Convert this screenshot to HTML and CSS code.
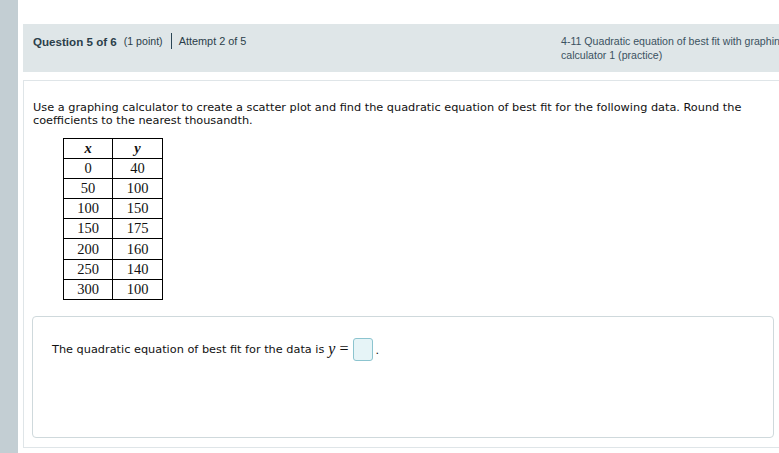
FILE: index.html
```html
<!DOCTYPE html>
<html>
<head>
<meta charset="utf-8">
<link rel="stylesheet" href="styles.css">
</head>
<body>
<div class="page">
  <div class="sidebar"></div>
  <div class="main">
    <div class="qhead">
      <div class="qleft">
        <span class="qnum">Question 5 of 6</span>
        <span class="qpts">(1 point)</span>
        <span class="qdiv"></span>
        <span class="qatt">Attempt 2 of 5</span>
      </div>
      <div class="qright">4-11 Quadratic equation of best fit with graphing calculator 1 (practice)</div>
    </div>
    <div class="panel">
      <p class="prompt">Use a graphing calculator to create a scatter plot and find the quadratic equation of best fit for the following data. Round the coefficients to the nearest thousandth.</p>
      <table class="data">
        <tr><th class="c1">x</th><th class="c2">y</th></tr>
        <tr><td>0</td><td>40</td></tr>
        <tr><td>50</td><td>100</td></tr>
        <tr><td>100</td><td>150</td></tr>
        <tr><td>150</td><td>175</td></tr>
        <tr><td>200</td><td>160</td></tr>
        <tr><td>250</td><td>140</td></tr>
        <tr><td>300</td><td>100</td></tr>
      </table>
      <div class="answer">
        <p class="eq"><span>The quadratic equation of best fit for the data is</span><span class="math"><i>y</i> =</span><span class="inbox"></span><span class="dot">.</span></p>
      </div>
    </div>
  </div>
</div>
</body>
</html>
```

FILE: styles.css
```css
html, body {
  margin: 0;
  padding: 0;
  background: #ffffff;
  overflow: hidden;
}
.page {
  display: flex;
  height: 453px;
  width: 779px;
  overflow: hidden;
}
.sidebar {
  flex: none;
  width: 18px;
  background: #c3ced3;
}
.main {
  flex: none;
  width: 760px;
  margin-left: 5px;
  padding-top: 24px;
}
.qhead {
  height: 48px;
  background: #dfe6e8;
  display: flex;
  align-items: flex-start;
  font-family: "Liberation Sans", Arial, sans-serif;
  color: #2b3e4a;
}
.qleft {
  flex: none;
  width: 538px;
  padding-left: 10px;
  box-sizing: border-box;
  display: flex;
  align-items: center;
  height: 16px;
  margin-top: 9px;
}
.qnum {
  font-weight: bold;
  font-size: 11.6px;
}
.qpts {
  font-size: 10.6px;
  margin-left: 7px;
}
.qdiv {
  width: 1px;
  height: 16px;
  background: #2b4656;
  margin: 0 7px 0 8px;
}
.qatt {
  font-size: 10.9px;
}
.qright {
  flex: none;
  width: 260px;
  font-size: 10.6px;
  line-height: 14px;
  padding-top: 10px;
  color: #3b5261;
}
.panel {
  margin-top: 8px;
  border: 1px solid #dfe5e8;
  padding: 0 8px;
  box-sizing: border-box;
  height: 368px;
  font-family: "DejaVu Sans", Verdana, sans-serif;
}
.prompt {
  margin: 0;
  padding: 20px 0 0 1px;
  font-size: 11.3px;
  line-height: 13px;
  color: #111111;
}
.data {
  border-collapse: collapse;
  margin: 11px 0 0 31px;
  font-family: "Liberation Serif", "Times New Roman", serif;
  font-size: 14.5px;
  color: #111111;
}
.data th, .data td {
  border: 1px solid #000000;
  height: 19.1px;
  padding: 0;
  text-align: center;
  line-height: 19px;
}
.data .c1 {
  width: 48px;
}
.data .c2 {
  width: 49px;
}
.data th {
  font-style: italic;
  font-weight: bold;
}
.answer {
  margin-top: 16px;
  border: 1px solid #cfd9dc;
  border-radius: 4px;
  height: 122px;
  box-sizing: border-box;
  padding: 21px 0 0 19px;
}
.eq {
  margin: 0;
  font-size: 11.3px;
  color: #111111;
  display: flex;
  align-items: center;
  white-space: pre;
}
.math {
  font-family: "Liberation Serif", "Times New Roman", serif;
  font-size: 16px;
  margin-left: 4px;
}
.inbox {
  display: inline-block;
  width: 18px;
  height: 21px;
  background: #e6f4f7;
  border: 1px solid #8cc4cf;
  border-radius: 3px;
  margin-left: 4px;
  margin-right: 3px;
}
.dot {
  margin-top: 3px;
}
```
